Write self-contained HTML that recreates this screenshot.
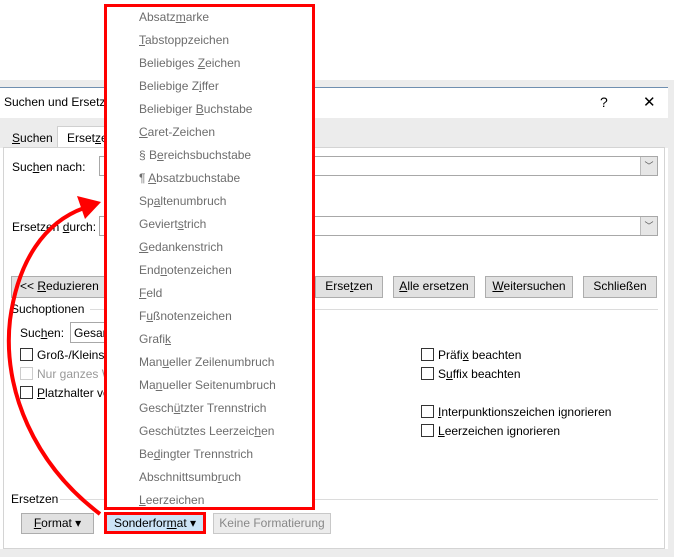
<!DOCTYPE html>
<html><head><meta charset="utf-8"><style>
body{margin:0;width:674px;height:557px;position:relative;overflow:hidden;background:#fff;font-family:"Liberation Sans",sans-serif;font-size:12px;color:#000}
.a{position:absolute}
.gray{background:#ececec}
.btn{position:absolute;background:#e1e1e1;border:1px solid #adadad;box-sizing:border-box;text-align:center;line-height:19px;font-size:12px}
.cb{position:absolute;width:13px;height:13px;border:1px solid #333;box-sizing:border-box;background:#fff}
.combo{position:absolute;border:1px solid #a8a8a8;box-sizing:border-box;background:#fff}
.dd{position:absolute;right:0;top:0;width:16px;height:18px;background:#e6e6e6;border-left:1px solid #bbb;font-size:9px;text-align:center;line-height:18px;color:#555}
.mi{position:absolute;left:32px;color:#6d6d6d;font-size:12px;margin-top:-3px}
u{text-decoration:underline}
</style></head><body>
<div class="a gray" style="left:0;top:80px;width:674px;height:7px"></div>
<div class="a" style="left:0;top:87px;width:668px;height:1px;background:#6f8fb0"></div>
<div class="a" style="left:668px;top:80px;width:6px;height:477px;background:#ececec"></div>
<div class="a" style="left:0;top:88px;width:668px;height:30px;background:#fff"></div>
<div class="a" style="left:4px;top:95px">Suchen und Ersetzen</div>
<div class="a" style="left:600px;top:94px;font-size:14px">?</div>
<div class="a" style="left:643px;top:93px;font-size:15px">✕</div>
<div class="a gray" style="left:0;top:118px;width:668px;height:30px"></div>
<div class="a" style="left:12px;top:131px"><u>S</u>uchen</div>
<div class="a" style="left:57px;top:126px;width:60px;height:22px;background:#fff;border:1px solid #d0d0d0;border-bottom:none"></div>
<div class="a" style="left:67px;top:131px">Erset<u>z</u>en</div>
<div class="a" style="left:3px;top:147px;width:662px;height:402px;background:#fff;border:1px solid #d4d4d4;box-sizing:border-box"></div>
<div class="a" style="left:0;top:549px;width:674px;height:8px;background:#ececec"></div>
<div class="a" style="left:12px;top:160px">Suc<u>h</u>en nach:</div>
<div class="combo" style="left:99px;top:156px;width:559px;height:20px"><div class="dd">﹀</div></div>
<div class="a" style="left:12px;top:220px">Ersetzen <u>d</u>urch:</div>
<div class="combo" style="left:99px;top:216px;width:559px;height:20px"><div class="dd">﹀</div></div>
<div class="btn" style="left:11px;top:276px;width:100px;height:22px;text-align:left;padding-left:8px">&lt;&lt; <u>R</u>eduzieren</div>
<div class="btn" style="left:315px;top:276px;width:68px;height:22px">Erse<u>t</u>zen</div>
<div class="btn" style="left:393px;top:276px;width:82px;height:22px"><u>A</u>lle ersetzen</div>
<div class="btn" style="left:485px;top:276px;width:88px;height:22px"><u>W</u>eitersuchen</div>
<div class="btn" style="left:583px;top:276px;width:74px;height:22px">Schließen</div>
<div class="a" style="left:11px;top:302px">Suchoptionen</div>
<div class="a" style="left:90px;top:309px;width:568px;height:1px;background:#dcdcdc"></div>
<div class="a" style="left:20px;top:326px">Suc<u>h</u>en:</div>
<div class="combo" style="left:70px;top:322px;width:60px;height:21px;padding:3px 0 0 3px">Gesamt</div>
<div class="cb" style="left:20px;top:348px"></div><div class="a" style="left:37px;top:348px">Groß-/Kleinschreibung</div>
<div class="cb" style="left:20px;top:367px;border-color:#ccc"></div><div class="a" style="left:37px;top:367px;color:#999">Nur ganzes Wort</div>
<div class="cb" style="left:20px;top:386px"></div><div class="a" style="left:37px;top:386px"><u>P</u>latzhalter verwenden</div>
<div class="cb" style="left:421px;top:348px"></div><div class="a" style="left:438px;top:348px">Präfi<u>x</u> beachten</div>
<div class="cb" style="left:421px;top:367px"></div><div class="a" style="left:438px;top:367px">S<u>u</u>ffix beachten</div>
<div class="cb" style="left:421px;top:405px"></div><div class="a" style="left:438px;top:405px"><u>I</u>nterpunktionszeichen ignorieren</div>
<div class="cb" style="left:421px;top:424px"></div><div class="a" style="left:438px;top:424px"><u>L</u>eerzeichen ignorieren</div>
<div class="a" style="left:11px;top:492px">Ersetzen</div>
<div class="a" style="left:60px;top:499px;width:598px;height:1px;background:#dcdcdc"></div>
<div class="btn" style="left:21px;top:513px;width:73px;height:21px"><u>F</u>ormat ▾</div>
<div class="btn" style="left:213px;top:513px;width:118px;height:21px;color:#888;background:#ececec;border-color:#c8c8c8">Keine Formatierung</div>
<div class="a" style="left:104px;top:512px;width:102px;height:22px;background:#cce4f7;border:3px solid #f00;box-sizing:border-box;text-align:center;line-height:16px">Sonderfor<u>m</u>at ▾</div>
<div class="a" style="left:104px;top:4px;width:211px;height:506px;background:#fff;border:3px solid #f00;box-sizing:border-box">
<div class="mi" style="top:6px">Absatz<u>m</u>arke</div>
<div class="mi" style="top:29px"><u>T</u>abstoppzeichen</div>
<div class="mi" style="top:52px">Beliebiges <u>Z</u>eichen</div>
<div class="mi" style="top:75px">Beliebige Z<u>i</u>ffer</div>
<div class="mi" style="top:98px">Beliebiger <u>B</u>uchstabe</div>
<div class="mi" style="top:121px"><u>C</u>aret-Zeichen</div>
<div class="mi" style="top:144px">§ B<u>e</u>reichsbuchstabe</div>
<div class="mi" style="top:167px">¶ <u>A</u>bsatzbuchstabe</div>
<div class="mi" style="top:190px">Sp<u>a</u>ltenumbruch</div>
<div class="mi" style="top:213px">Geviert<u>s</u>trich</div>
<div class="mi" style="top:236px"><u>G</u>edankenstrich</div>
<div class="mi" style="top:259px">End<u>n</u>otenzeichen</div>
<div class="mi" style="top:282px"><u>F</u>eld</div>
<div class="mi" style="top:305px">F<u>u</u>ßnotenzeichen</div>
<div class="mi" style="top:328px">Grafi<u>k</u></div>
<div class="mi" style="top:351px">Man<u>u</u>eller Zeilenumbruch</div>
<div class="mi" style="top:374px">Ma<u>n</u>ueller Seitenumbruch</div>
<div class="mi" style="top:397px">Gesch<u>ü</u>tzter Trennstrich</div>
<div class="mi" style="top:420px">Geschütztes Leerzeic<u>h</u>en</div>
<div class="mi" style="top:443px">Be<u>d</u>ingter Trennstrich</div>
<div class="mi" style="top:466px">Abschnittsumb<u>r</u>uch</div>
<div class="mi" style="top:489px"><u>L</u>eerzeichen</div>
</div>
<svg class="a" style="left:0;top:0" width="674" height="557">
<path d="M100,514 C35,465 2,390 10,320 C18,260 45,222 84,208" fill="none" stroke="#f00" stroke-width="4"/>
<polygon points="101,202 77,196 85,219" fill="#f00"/>
</svg>
</body></html>
